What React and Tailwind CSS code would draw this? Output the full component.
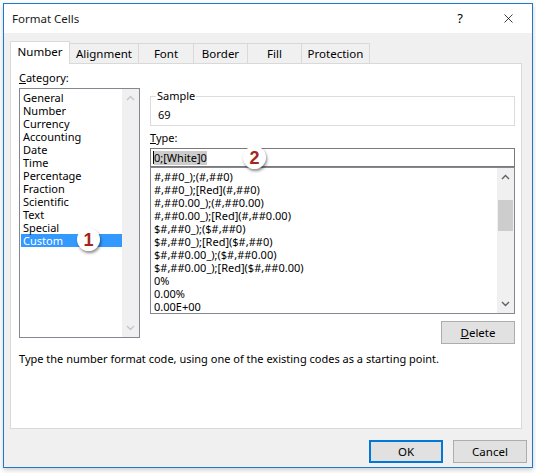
import { X } from 'lucide-react';

const font = { fontFamily: '"Segoe UI", "Noto Sans", "Liberation Sans", sans-serif' };

const categories = [
    'General', 'Number', 'Currency', 'Accounting', 'Date', 'Time',
    'Percentage', 'Fraction', 'Scientific', 'Text', 'Special', 'Custom'
];

const formats = [
    '#,##0_);(#,##0)',
    '#,##0_);[Red](#,##0)',
    '#,##0.00_);(#,##0.00)',
    '#,##0.00_);[Red](#,##0.00)',
    '$#,##0_);($#,##0)',
    '$#,##0_);[Red]($#,##0)',
    '$#,##0.00_);($#,##0.00)',
    '$#,##0.00_);[Red]($#,##0.00)',
    '0%',
    '0.00%',
    '0.00E+00'
];

const tabs = [
    { name: 'Number', w: 'w-[60px]' },
    { name: 'Alignment', w: 'w-[70px]' },
    { name: 'Font', w: 'w-[56px]' },
    { name: 'Border', w: 'w-[55px]' },
    { name: 'Fill', w: 'w-[55px]' },
    { name: 'Protection', w: 'w-[69px]' }
];

const Chevron = ({ up, color }) => (
    <svg width="9" height="6" viewBox="0 0 9 6" className="block">
        <path
            d={up ? 'M1 5 L4.5 1.5 L8 5' : 'M1 1 L4.5 4.5 L8 1'}
            fill="none"
            stroke={color}
            strokeWidth="1.4"
        />
    </svg>
);

const Badge = ({ n }) => (
    <div className="absolute w-[23px] h-[23px] rounded-full bg-white shadow-[1px_2px_3px_rgba(0,0,0,0.45)] flex items-center justify-center">
        <span className="text-[18px] leading-none font-bold text-[#a3261b]" style={{ fontFamily: '"Liberation Sans", sans-serif' }}>{n}</span>
    </div>
);

const App = () => {
    return (
        <div className="w-[536px] h-[473px] bg-white text-[11px] text-black" style={font}>
            <div className="ml-[3px] pt-[3px]">
                <div className="w-[530px] h-[465px] border border-[#1e78d2] bg-[#f0f0f0] flex flex-col shadow-[0_2px_5px_rgba(0,0,0,0.2)]">
                    {/* Title bar */}
                    <div className="h-[29px] bg-white flex items-center pl-[8px] shrink-0">
                        <span className="text-[11.5px] text-[#1a1a1a]">Format Cells</span>
                        <span className="ml-auto mr-[38px] text-[13px]">?</span>
                        <X className="w-[15px] h-[15px] mr-[16px] text-black" strokeWidth={1.2} />
                    </div>

                    {/* Tabs */}
                    <div className="flex items-end h-[22px] mt-[8px] ml-[6px]">
                        {tabs.map((t, i) => (
                            i === 0 ? (
                                <div key={t.name} className={`${t.w} h-[23px] -mb-px relative z-10 bg-white border border-b-0 border-[#d9d9d9] flex items-center justify-center pb-[2px] text-[11.5px]`}>
                                    {t.name}
                                </div>
                            ) : (
                                <div key={t.name} className={`${t.w} h-[20px] -ml-px bg-[#f0f0f0] border border-b-0 border-[#d9d9d9] flex items-center justify-center text-[11.5px]`}>
                                    {t.name}
                                </div>
                            )
                        ))}
                    </div>

                    {/* Panel */}
                    <div className="ml-[6px] w-[512px] h-[366px] bg-white border border-[#d9d9d9] flex flex-col">
                        <div className="flex">
                            {/* Category column */}
                            <div className="ml-[8px] pt-[6px] w-[121px]">
                                <div className="h-[16px] leading-[16px] mb-[2px]"><span className="underline">C</span>ategory:</div>
                                <div className="relative h-[250px] border border-[#828790] flex">
                                    <div className="flex-1 pt-[2px] pl-[1px]">
                                        {categories.map((c) => (
                                            <div
                                                key={c}
                                                className={`h-[13px] leading-[13px] pl-[2px] ${c === 'Custom' ? 'bg-[#3399ff] text-white' : ''}`}
                                            >
                                                {c}
                                            </div>
                                        ))}
                                    </div>
                                    <div className="w-[17px] bg-[#f0f0f0] flex flex-col items-center justify-between py-[6px]">
                                        <Chevron up color="#c5c5c5" />
                                        <Chevron color="#c5c5c5" />
                                    </div>
                                    <div className="left-[57px] top-[139px] absolute">
                                        <Badge n="1" />
                                    </div>
                                </div>
                            </div>

                            {/* Right column */}
                            <div className="ml-[10px] w-[365px] pt-[32px]">
                                <div className="relative h-[30px] border border-[#dcdcdc]">
                                    <span className="absolute left-[5px] -top-[9px] bg-white px-[1px] leading-[16px]">Sample</span>
                                    <div className="pl-[7px] pt-[10px] leading-[16px]">69</div>
                                </div>
                                <div className="mt-[4px] h-[16px] leading-[16px] mb-[2px]"><span className="underline">T</span>ype:</div>
                                <div className="relative h-[19px] border border-[#7a7a7a] flex items-center pl-[2px]">
                                    <span className="w-px h-[13px] bg-black" />
                                    <span className="bg-[#cccccc] leading-[14px]">0;[White]0</span>
                                    <div className="absolute left-[92px] -top-[3px]">
                                        <Badge n="2" />
                                    </div>
                                </div>
                                <div className="h-[147px] border border-[#828790] flex">
                                    <div className="flex-1 pt-[2px] pl-[3px]">
                                        {formats.map((f) => (
                                            <div key={f} className="h-[13px] leading-[13px] whitespace-nowrap">{f}</div>
                                        ))}
                                    </div>
                                    <div className="w-[17px] bg-[#f0f0f0] flex flex-col items-center py-[6px]">
                                        <Chevron up color="#606060" />
                                        <div className="mt-[20px] w-[15px] h-[31px] bg-[#cdcdcd]" />
                                        <div className="mt-auto">
                                            <Chevron color="#606060" />
                                        </div>
                                    </div>
                                </div>
                                <div className="flex justify-end mt-[7px]">
                                    <button className="w-[74px] h-[23px] bg-[#e1e1e1] border border-[#adadad] leading-none text-[11.5px]">
                                        <span className="underline">D</span>elete
                                    </button>
                                </div>
                            </div>
                        </div>
                        <div className="ml-[8px] mt-[7px]">
                            Type the number format code, using one of the existing codes as a starting point.
                        </div>
                    </div>

                    {/* Buttons */}
                    <div className="flex justify-end gap-[10px] mt-[11px] mr-[5px]">
                        <button className="w-[74px] h-[23px] bg-[#e1e1e1] border-2 border-[#0078d7] leading-none text-[11.5px]">OK</button>
                        <button className="w-[74px] h-[23px] bg-[#e1e1e1] border border-[#adadad] leading-none text-[11.5px]">Cancel</button>
                    </div>
                </div>
            </div>
        </div>
    );
};

export default App;
